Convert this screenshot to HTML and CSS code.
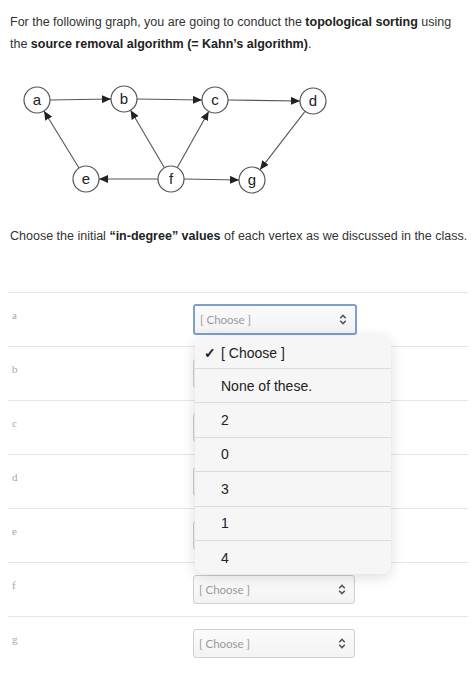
FILE: index.html
```html
<!DOCTYPE html>
<html>
<head>
<meta charset="utf-8">
<link rel="stylesheet" href="styles.css">
</head>
<body>
<p class="intro">For the following graph, you are going to conduct the <b>topological sorting</b> using the <b>source removal algorithm (= Kahn’s algorithm)</b>.</p>

<svg class="graph" width="340" height="120" viewBox="0 0 340 120">
  <defs>
    <marker id="ah" markerWidth="9" markerHeight="8" refX="9" refY="4" orient="auto" markerUnits="userSpaceOnUse">
      <path d="M0,0 L9,4 L0,8 z" fill="#222"/>
    </marker>
  </defs>
  <g stroke="#555" stroke-width="1.1" marker-end="url(#ah)">
    <line x1="50" y1="22" x2="111" y2="21"/>
    <line x1="137" y1="21" x2="202" y2="22"/>
    <line x1="228" y1="22" x2="300" y2="23"/>
    <line x1="79" y1="90" x2="44" y2="33"/>
    <line x1="164.4" y1="89.8" x2="130.6" y2="32.2"/>
    <line x1="177.3" y1="89.6" x2="208.7" y2="33.4"/>
    <line x1="158" y1="101" x2="99" y2="101"/>
    <line x1="184" y1="101" x2="239" y2="102"/>
    <line x1="305" y1="33.3" x2="260" y2="91.7"/>
  </g>
  <g fill="#fff" stroke="#555" stroke-width="1.2">
    <circle cx="37" cy="22" r="13"/>
    <circle cx="124" cy="21" r="13"/>
    <circle cx="215" cy="22" r="13"/>
    <circle cx="313" cy="23" r="13"/>
    <circle cx="86" cy="101" r="13"/>
    <circle cx="171" cy="101" r="13"/>
    <circle cx="252" cy="102" r="13"/>
  </g>
  <g class="nodetext" text-anchor="middle">
    <text x="37" y="27">a</text>
    <text x="124" y="26">b</text>
    <text x="215" y="27">c</text>
    <text x="313" y="28">d</text>
    <text x="86" y="106">e</text>
    <text x="171" y="106">f</text>
    <text x="252" y="107">g</text>
  </g>
</svg>

<p class="prompt">Choose the initial <b>“in-degree” values</b> of each vertex as we discussed in the class.</p>

<div class="quiz">
  <div class="row"><div class="label">a</div><div class="select focused"><span>[ Choose ]</span><svg class="chev" width="8" height="11" viewBox="0 0 8 11"><path d="M1.2 4.2 L4 1.4 L6.8 4.2 M1.2 6.8 L4 9.6 L6.8 6.8" fill="none" stroke="#555" stroke-width="1.5"/></svg></div></div>
  <div class="row"><div class="label">b</div><div class="select"></div></div>
  <div class="row"><div class="label">c</div><div class="select"></div></div>
  <div class="row"><div class="label">d</div><div class="select"></div></div>
  <div class="row"><div class="label">e</div><div class="select"></div></div>
  <div class="row"><div class="label">f</div><div class="select"><span>[ Choose ]</span><svg class="chev" width="8" height="11" viewBox="0 0 8 11"><path d="M1.2 4.2 L4 1.4 L6.8 4.2 M1.2 6.8 L4 9.6 L6.8 6.8" fill="none" stroke="#555" stroke-width="1.5"/></svg></div></div>
  <div class="row"><div class="label">g</div><div class="select"><span>[ Choose ]</span><svg class="chev" width="8" height="11" viewBox="0 0 8 11"><path d="M1.2 4.2 L4 1.4 L6.8 4.2 M1.2 6.8 L4 9.6 L6.8 6.8" fill="none" stroke="#555" stroke-width="1.5"/></svg></div></div>
</div>

<ul class="menu">
  <li class="first"><span class="check">✓</span>[ Choose ]</li>
  <li>None of these.</li>
  <li>2</li>
  <li>0</li>
  <li>3</li>
  <li>1</li>
  <li class="last">4</li>
</ul>
</body>
</html>
```
FILE: styles.css
```css
html, body {
  margin: 0;
  padding: 0;
  background: #fff;
}
body {
  width: 474px;
  height: 676px;
  overflow: hidden;
  position: relative;
  font-family: "Liberation Sans", Arial, sans-serif;
  color: #333;
}
.intro {
  margin: 11px 8px 0 10px;
  font-size: 12.5px;
  line-height: 22px;
}
.intro b, .prompt b {
  color: #222;
}
.graph {
  display: block;
  margin-top: 23px;
}
.nodetext text {
  font-family: "Liberation Sans", Arial, sans-serif;
  font-size: 15px;
  fill: #222;
}
.prompt {
  margin: 27px 0 0 10px;
  font-size: 12.5px;
  line-height: 22px;
  white-space: nowrap;
}
.quiz {
  margin: 45px 6px 0 8px;
}
.row {
  display: flex;
  height: 53px;
  border-top: 1px solid #e6e6e6;
}
.label {
  width: 185px;
  padding: 16px 0 0 4px;
  box-sizing: border-box;
  font-family: "Liberation Serif", serif;
  font-size: 11px;
  color: #a8a8a8;
}
.select {
  margin-top: 12px;
  width: 162px;
  height: 29px;
  box-sizing: border-box;
  border: 1px solid #cfcfcf;
  border-radius: 3px;
  background: linear-gradient(#fbfbfb, #f3f3f3);
  display: flex;
  align-items: center;
  justify-content: space-between;
  padding: 0 8px 0 5px;
  font-family: Lato, sans-serif;
  font-size: 11.5px;
  color: #9a9a9a;
}
.select.focused {
  margin-top: 11px;
  width: 164px;
  height: 31px;
  border: 2px solid #7d9fcf;
  padding: 0 8px 0 5px;
}
.chev {
  display: block;
}
.menu {
  position: absolute;
  left: 195px;
  top: 336px;
  width: 196px;
  margin: 0;
  padding: 0;
  list-style: none;
  background: #f6f6f6;
  border-radius: 9px;
  box-shadow: 0 3px 14px rgba(0, 0, 0, 0.14);
  font-family: "Liberation Sans", Arial, sans-serif;
  font-size: 14px;
  color: #222;
}
.menu li {
  height: 33.4px;
  box-sizing: content-box;
  border-bottom: 1px solid #dcdcdc;
  display: flex;
  align-items: center;
  padding-left: 26px;
}
.menu li.first {
  height: 31px;
  padding-left: 9px;
  padding-top: 1px;
}
.menu li.last {
  border-bottom: none;
}
.check {
  width: 17px;
  font-weight: bold;
}
```
